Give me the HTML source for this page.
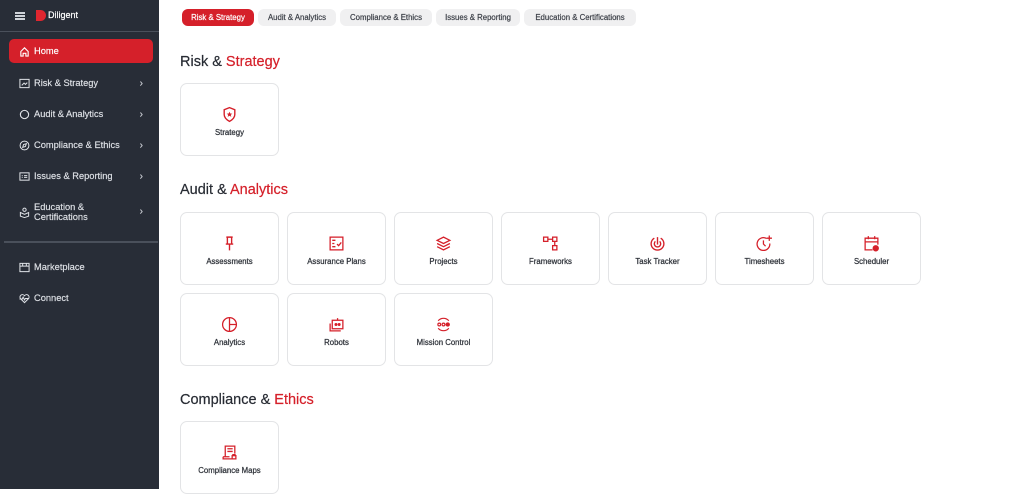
<!DOCTYPE html>
<html><head><meta charset="utf-8"><style>
*{box-sizing:border-box;margin:0;padding:0}
body{width:1024px;height:489px;overflow:hidden;background:#fff;font-family:"Liberation Sans",sans-serif;position:relative}
.sb{position:absolute;left:0;top:0;width:159px;height:489px;background:#282d37;color:#e6e8ec}
.sb .hdr{height:32px;border-bottom:1px solid #4a505b;position:relative}
.nav{position:absolute;left:9px;width:144px;height:24px;font-size:9.3px;display:flex;align-items:center;padding-left:10px;color:#dfe2e7;-webkit-text-stroke:0.15px #dfe2e7}
.nav svg{width:11px;height:11px;margin-right:4px;flex:none}
.nav .ch{position:absolute;right:10px;font-size:10px;color:#c8ccd3}
.home{background:#d5202a;border-radius:5px;color:#fff;-webkit-text-stroke:0.15px #fff}
.tab{position:absolute;top:9px;height:17px;border-radius:6px;background:#f0f0f1;color:#3b3f47;font-size:7.8px;display:flex;align-items:center;justify-content:center;-webkit-text-stroke:0.2px #3b3f47}
h2{position:absolute;left:180px;font-size:14.5px;font-weight:normal;color:#272b33;-webkit-text-stroke:0.2px #272b33}
h2 span{color:#d5202a;-webkit-text-stroke:0.2px #d5202a}
.card{position:absolute;width:99px;height:73px;border:1px solid #e3e4e6;border-radius:7px;background:#fff}
.card svg{position:absolute;left:40px;top:22px;width:17px;height:17px}
.card div{position:absolute;left:0;right:0;top:44px;text-align:center;font-size:7.8px;color:#2f333a;-webkit-text-stroke:0.25px #2f333a}
</style></head><body>
<div class="sb">
<div class="hdr">
<div style="position:absolute;left:15px;top:12px;width:10px;height:1.5px;background:#cfd3d9;box-shadow:0 3px 0 #cfd3d9,0 6px 0 #cfd3d9"></div>
<div style="position:absolute;left:36px;top:10px;width:10px;height:11px;background:#e0262f;border-radius:0 6px 6px 0"></div>
<div style="position:absolute;left:48px;top:10px;font-size:9px;color:#fff;-webkit-text-stroke:0.2px #fff">Diligent</div>
</div>
<div class="nav home" style="top:39px"><svg viewBox="0 0 12 12" fill="none" stroke="#fff" stroke-width="1.2"><path d="M2 6l4-4 4 4v5H7.5V8h-3v3H2z"/></svg>Home</div>
<div class="nav" style="top:71px"><svg viewBox="0 0 12 12" fill="none" stroke="#dfe2e7" stroke-width="1.1"><rect x="1" y="1.5" width="10" height="9"/><path d="M3 8l2.5-2.5 1.5 1.5L9 5"/></svg>Risk &amp; Strategy<span class="ch">›</span></div>
<div class="nav" style="top:102px"><svg viewBox="0 0 12 12" fill="none" stroke="#dfe2e7" stroke-width="1.2"><circle cx="6" cy="6" r="4.5"/></svg>Audit &amp; Analytics<span class="ch">›</span></div>
<div class="nav" style="top:133px"><svg viewBox="0 0 12 12" fill="none" stroke="#dfe2e7" stroke-width="1.1"><circle cx="6" cy="6" r="4.8"/><path d="M8 4L5 5 4 8l3-1z"/></svg>Compliance &amp; Ethics<span class="ch">›</span></div>
<div class="nav" style="top:164px"><svg viewBox="0 0 12 12" fill="none" stroke="#dfe2e7" stroke-width="1.1"><rect x="1" y="2" width="10" height="8"/><path d="M3 5h1M3 7h1M5.5 5h3.5M5.5 7h3.5"/></svg>Issues &amp; Reporting<span class="ch">›</span></div>
<div class="nav" style="top:199px;height:26px;line-height:10.5px"><svg viewBox="0 0 12 12" fill="none" stroke="#dfe2e7" stroke-width="1.1"><circle cx="6" cy="3" r="1.8"/><path d="M1.5 6l4.5 2 4.5-2v4l-4.5 1.5L1.5 10z"/></svg><span>Education &amp;<br>Certifications</span><span class="ch">›</span></div>
<div style="position:absolute;left:4px;top:241px;width:154px;height:2px;background:#4a505b"></div>
<div class="nav" style="top:255px"><svg viewBox="0 0 12 12" fill="none" stroke="#dfe2e7" stroke-width="1.1"><rect x="1" y="1.5" width="10" height="9"/><path d="M1 4.5h10M4 1.5v3M8 1.5v3"/></svg>Marketplace</div>
<div class="nav" style="top:286px"><svg viewBox="0 0 12 12" fill="none" stroke="#dfe2e7" stroke-width="1.1"><path d="M6 10.5L1.5 6a2.5 2.5 0 014.5-3 2.5 2.5 0 014.5 3z"/><path d="M0.5 6.5h3l1-2 1.5 3 1-1.5h4"/></svg>Connect</div>
</div>

<div class="tab" style="left:182px;width:72px;background:#d5202a;color:#fff;-webkit-text-stroke:0.2px #fff">Risk &amp; Strategy</div>
<div class="tab" style="left:258px;width:78px">Audit &amp; Analytics</div>
<div class="tab" style="left:340px;width:92px">Compliance &amp; Ethics</div>
<div class="tab" style="left:436px;width:84px">Issues &amp; Reporting</div>
<div class="tab" style="left:524px;width:112px">Education &amp; Certifications</div>

<h2 style="top:54px">Risk &amp; <span>Strategy</span></h2>
<h2 style="top:182px">Audit &amp; <span>Analytics</span></h2>
<h2 style="top:392px">Compliance &amp; <span>Ethics</span></h2>

<div class="card" style="left:180px;top:83px"><svg viewBox="0 0 16 16" fill="none" stroke="#d5202a" stroke-width="1.3"><path d="M8 1.5l5 2v4.5c0 3-2.3 5-5 6.5-2.7-1.5-5-3.5-5-6.5V3.5z"/><path d="M8 6l.6 1.3 1.4.1-1.1.9.4 1.4L8 8.9l-1.3.8.4-1.4-1.1-.9 1.4-.1z" fill="#d5202a" stroke-width=".5"/></svg><div>Strategy</div></div>

<div class="card" style="left:180px;top:212px"><svg viewBox="0 0 16 16" fill="none" stroke="#d5202a" stroke-width="1.3"><path d="M5 2h6M6 2v6M10 2v6M4.5 8.5h7M8 8.5v6"/></svg><div>Assessments</div></div>
<div class="card" style="left:287px;top:212px"><svg viewBox="0 0 16 16" fill="none" stroke="#d5202a" stroke-width="1.2"><rect x="2" y="2" width="12" height="12"/><path d="M4 5h3M4 8h2M4 11h3M8.5 8.5l1.5 1.5 2.5-3"/></svg><div>Assurance Plans</div></div>
<div class="card" style="left:394px;top:212px"><svg viewBox="0 0 16 16" fill="none" stroke="#d5202a" stroke-width="1.2"><path d="M8 2l6 3-6 3-6-3z"/><path d="M2 8l6 3 6-3M2 11l6 3 6-3"/></svg><div>Projects</div></div>
<div class="card" style="left:501px;top:212px"><svg viewBox="0 0 16 16" fill="none" stroke="#d5202a" stroke-width="1.2"><rect x="1.5" y="2" width="4" height="4"/><rect x="10" y="2" width="4" height="4"/><rect x="10" y="10" width="4" height="4"/><path d="M5.5 4H10M12 6v4"/></svg><div>Frameworks</div></div>
<div class="card" style="left:608px;top:212px"><svg viewBox="0 0 16 16" fill="none" stroke="#d5202a" stroke-width="1.3"><path d="M5 3a6 6 0 106 0"/><path d="M6 6a3 3 0 104 0"/><path d="M8 2v7"/></svg><div>Task Tracker</div></div>
<div class="card" style="left:715px;top:212px"><svg viewBox="0 0 16 16" fill="none" stroke="#d5202a" stroke-width="1.2"><path d="M10 3.3A6 6 0 1013 8"/><path d="M7 5v3.5l2 2M12.5 0.5v5M10 3h5"/></svg><div>Timesheets</div></div>
<div class="card" style="left:822px;top:212px"><svg viewBox="0 0 16 16" fill="none" stroke="#d5202a" stroke-width="1.2"><path d="M9 14H2V3h12v6M2 6.5h12M5 1v3M11 1v3"/><circle cx="12" cy="12.5" r="3" fill="#d5202a" stroke="none"/></svg><div>Scheduler</div></div>

<div class="card" style="left:180px;top:293px"><svg viewBox="0 0 16 16" fill="none" stroke="#d5202a" stroke-width="1.2"><circle cx="8" cy="8" r="6.5"/><path d="M8 1.5v13M8 8h6.5"/></svg><div>Analytics</div></div>
<div class="card" style="left:287px;top:293px"><svg viewBox="0 0 16 16" fill="none" stroke="#d5202a" stroke-width="1.2"><rect x="4" y="4" width="10" height="8"/><path d="M2 7v7h10M9 2v2"/><circle cx="7.5" cy="8" r=".8" fill="#d5202a"/><circle cx="10.5" cy="8" r=".8" fill="#d5202a"/></svg><div>Robots</div></div>
<div class="card" style="left:394px;top:293px"><svg viewBox="0 0 16 16" fill="none" stroke="#d5202a" stroke-width="1.1"><path d="M3 4.5A6.5 6.5 0 0113 4.5M3 11.5A6.5 6.5 0 0013 11.5"/><circle cx="4" cy="8" r="1.3"/><circle cx="8" cy="8" r="1.3"/><circle cx="12" cy="8" r="1.5" fill="#d5202a"/></svg><div>Mission Control</div></div>

<div class="card" style="left:180px;top:421px"><svg viewBox="0 0 16 16" fill="none" stroke="#d5202a" stroke-width="1.2"><path d="M4 12V2h9v7M6 4.5h5M6 7h5M2 12v2h8M2 12h6"/><rect x="10.5" y="11" width="3.5" height="3"/><path d="M11.2 11v-1h2v1"/></svg><div>Compliance Maps</div></div>
</body></html>
